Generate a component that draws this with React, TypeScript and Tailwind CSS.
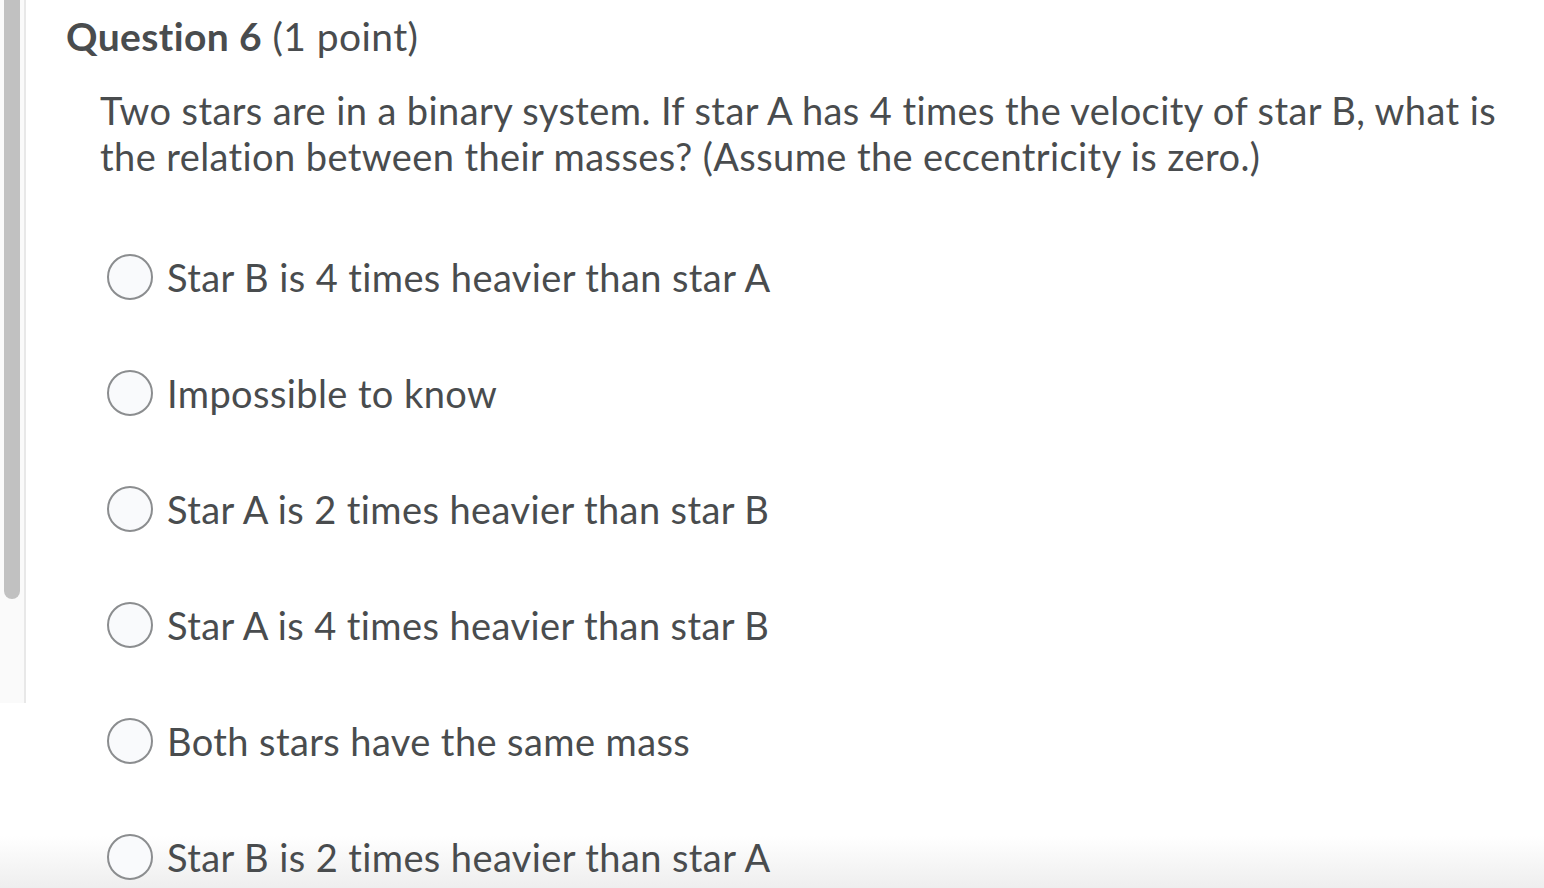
import React from "react";

const options = [
  "Star B is 4 times heavier than star A",
  "Impossible to know",
  "Star A is 2 times heavier than star B",
  "Star A is 4 times heavier than star B",
  "Both stars have the same mass",
  "Star B is 2 times heavier than star A",
];

export default function App() {
  return (
    <div
      className="flex h-[888px] w-full overflow-hidden bg-[linear-gradient(to_bottom,#ffffff_836px,#eeeeee_888px)] text-[#494c4e] [font-variant-ligatures:none]"
      style={{ fontFamily: "Lato, 'Noto Sans', sans-serif" }}
    >
      <div className="h-[703px] w-[26px] shrink-0 border-r-2 border-[#e8e8e8] bg-[#fafafa] pl-[4px]">
        <div className="h-[599px] w-[16px] rounded-b-full bg-[#c1c1c1]" />
      </div>
      <div className="flex flex-col pl-[40px] pt-[13px]">
        <h1 className="text-[39px] leading-[46px] tracking-[0.4px]">
          <span className="font-bold">Question 6</span> (1 point)
        </h1>
        <p className="ml-[34px] mt-[28px] text-[38px] leading-[46px] tracking-[0.4px]">
          Two stars are in a binary system. If star A has 4 times the velocity of star B, what is
          <br />
          the relation between their masses? (Assume the eccentricity is zero.)
        </p>
        <div className="ml-[41px] mt-[40px] flex flex-col">
          {options.map((o) => (
            <label key={o} className="flex h-[116px] items-center gap-[14px]">
              <span className="h-[46px] w-[46px] shrink-0 rounded-full border-2 border-[#8b8d8f] bg-[#f9fafc]" />
              <span className="text-[38px] leading-[46px] tracking-[0.4px]">{o}</span>
            </label>
          ))}
        </div>
      </div>
    </div>
  );
}
